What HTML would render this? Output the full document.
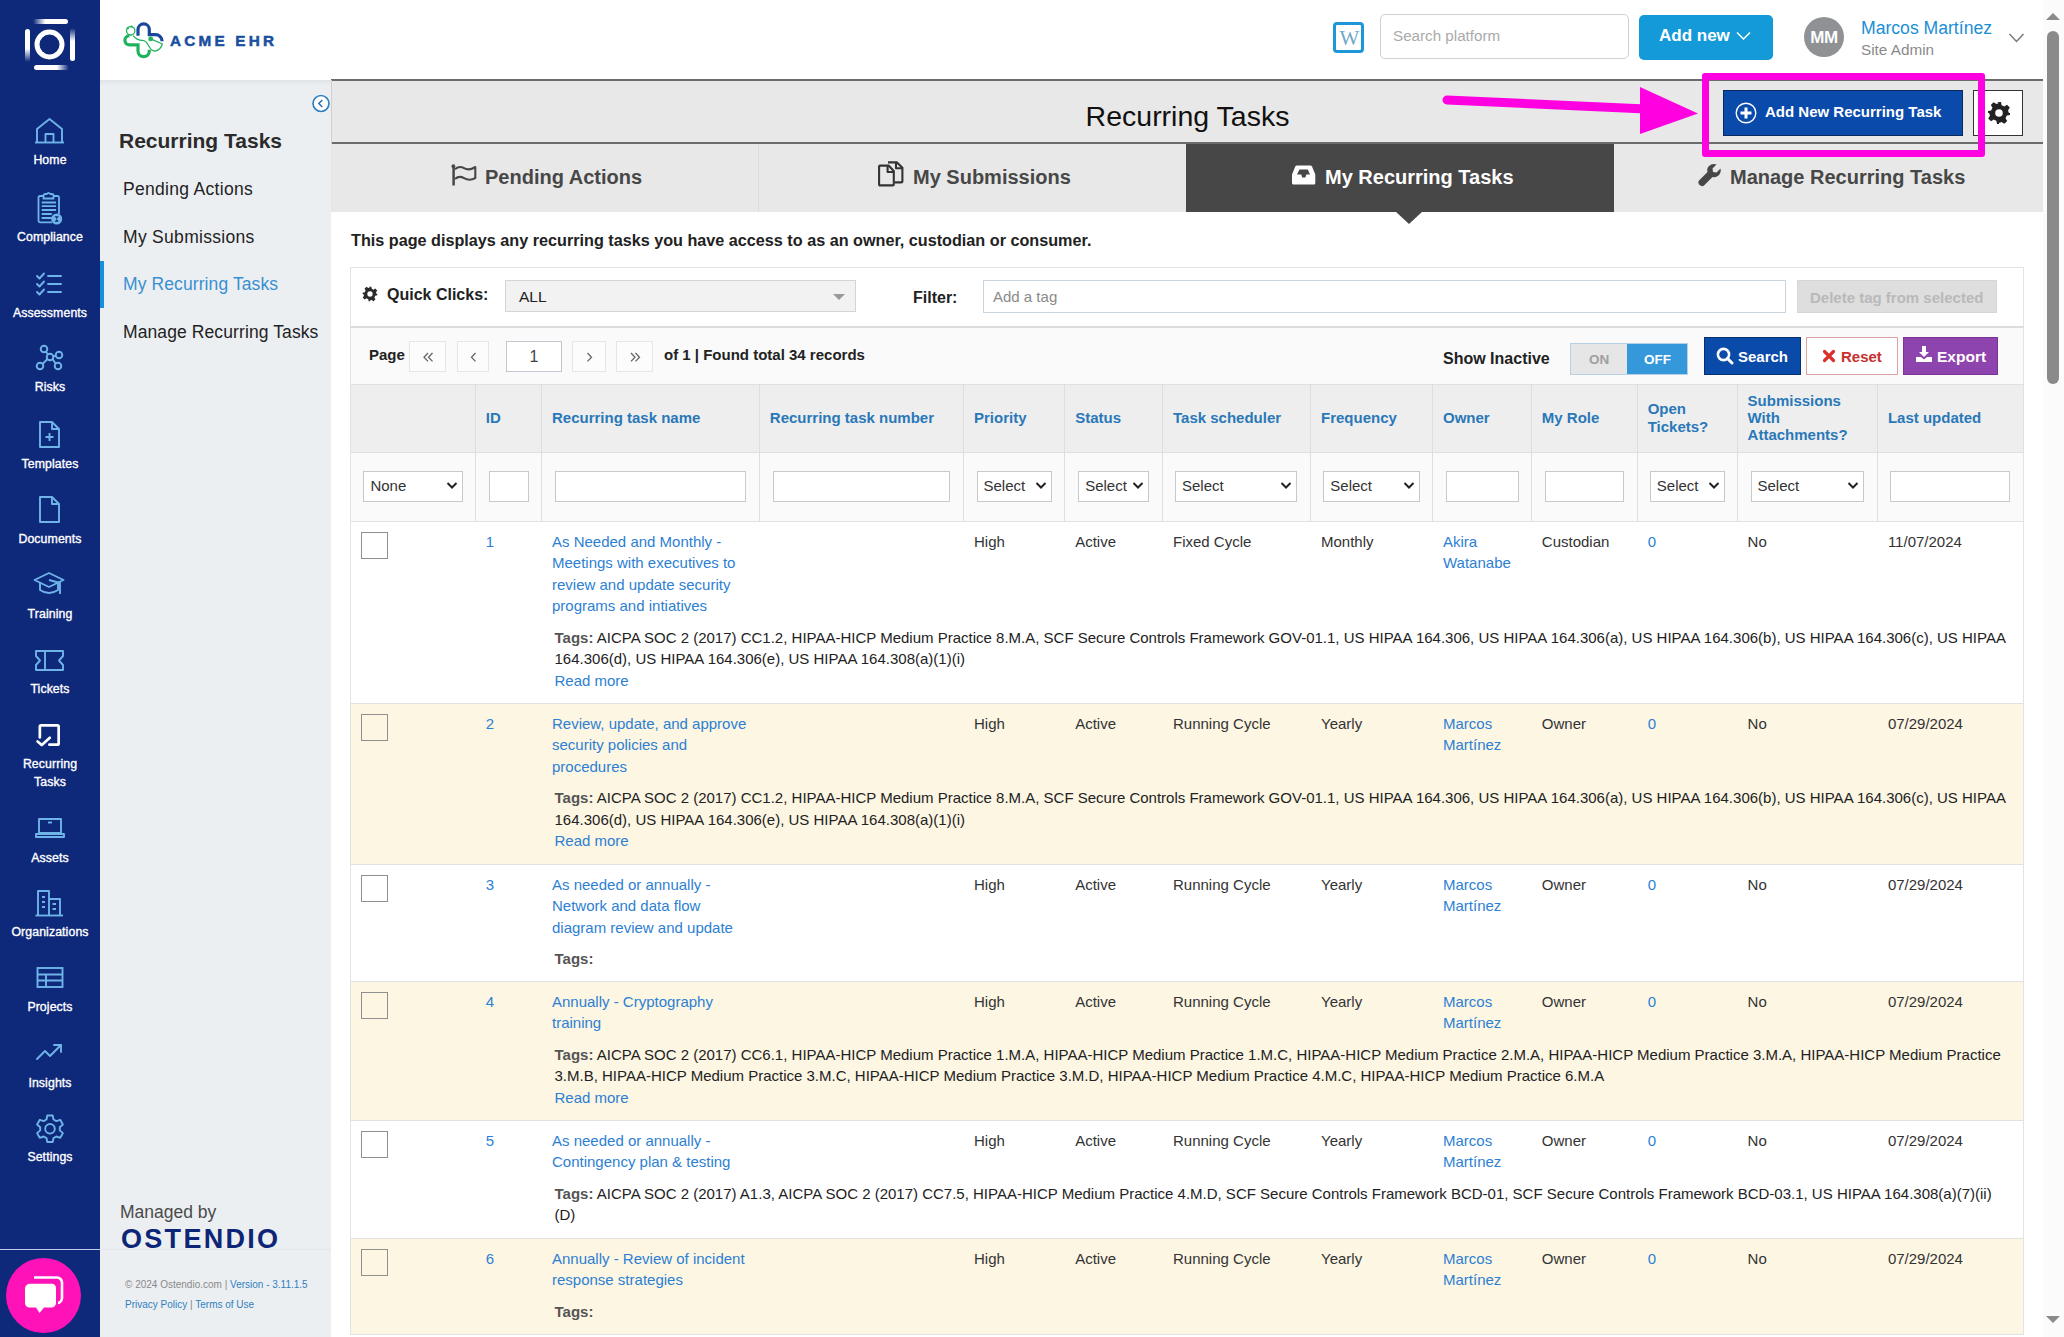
<!DOCTYPE html>
<html><head><meta charset="utf-8">
<style>
*{box-sizing:border-box;margin:0;padding:0}
html,body{width:2064px;height:1337px;overflow:hidden;background:#fff;font-family:"Liberation Sans",sans-serif;color:#333}
.abs{position:absolute}
#nav{position:absolute;left:0;top:0;width:100px;height:1337px;background:#0e287a}
#nav .lbl{position:absolute;left:0;width:100px;text-align:center;color:#fff;font-size:12.3px;font-weight:normal;line-height:17.5px;-webkit-text-stroke:0.35px #fff;letter-spacing:0.1px}
#nav svg{position:absolute}
#side{position:absolute;left:100px;top:80px;width:231px;height:1257px;background:#eceff2}
#hdr{position:absolute;left:100px;top:0;width:1944px;height:80px;background:#fff}
#main{position:absolute;left:331px;top:80px;width:1713px;height:1257px;background:#fff}
#scroll{position:absolute;left:2043px;top:0;width:21px;height:1337px;background:#fbfbfb}
</style></head><body>
<div id="hdr">
<!-- acme logo -->
<svg style="position:absolute;left:22px;top:20px" width="44" height="40" viewBox="0 0 44 40" fill="none" stroke-linecap="butt">
<path d="M16 15.7 V9.6 A5.65 5.65 0 0 1 27.3 9.6 V14.7 H33.5 A6.6 6.6 0 0 1 40.1 21.3" stroke="#1a479c" stroke-width="3.2"/>
<path d="M7.5 15.7 A4.6 4.6 0 0 0 7.5 24.9 H16 V31 A5.65 5.65 0 0 0 27.3 31 V29.8" stroke="#1fb35b" stroke-width="3.2"/>
<circle cx="8.7" cy="10.8" r="4.2" stroke="#1fb35b" stroke-width="1.3"/>
<circle cx="5.9" cy="8.2" r="1.1" fill="#1fb35b" stroke="none"/><circle cx="9.5" cy="6.6" r="1.1" fill="#1fb35b" stroke="none"/>
<path d="M11.1 15.6 Q15 20.5 20.6 20.3 Q24 20.5 26.5 25.5 Q29.5 31.5 33.5 31 Q38.5 30 40.4 24 L28.7 18.9" stroke="#1fb35b" stroke-width="1.3"/>
<circle cx="28.7" cy="18.9" r="2.4" fill="#1fb35b" stroke="none"/>
</svg>
<div style="position:absolute;left:70px;top:32px;font-weight:bold;font-size:15.3px;letter-spacing:3.2px;color:#1a4fa0;line-height:17px;-webkit-text-stroke:0.5px #1a4fa0">ACME EHR</div>
<!-- W icon -->
<div style="position:absolute;left:1233px;top:22px;width:31px;height:31px;border:3px solid #1e96d8;border-radius:4px;background:#fff"></div>
<div style="position:absolute;left:1233px;top:26px;width:31px;text-align:center;font-family:'Liberation Serif',serif;font-size:21px;color:#6fa8c8;line-height:24px;letter-spacing:-2px">W</div>
<div style="position:absolute;left:1280px;top:14px;width:249px;height:45px;border:1px solid #d0d0d0;border-radius:5px;background:#fff"></div>
<div style="position:absolute;left:1293px;top:27px;font-size:15.2px;color:#aaa;line-height:17px">Search platform</div>
<div style="position:absolute;left:1539px;top:15px;width:134px;height:45px;background:#149ad9;border-radius:5px"></div>
<div style="position:absolute;left:1559px;top:26px;font-size:17px;font-weight:bold;color:#fff;line-height:19px">Add new</div>
<svg style="position:absolute;left:1635px;top:29px" width="18" height="14" viewBox="0 0 18 14" fill="none" stroke="#fff" stroke-width="1.5"><path d="M2 3.5 L8.5 10 L15 3.5"/></svg>
<div style="position:absolute;left:1704px;top:17px;width:40px;height:40px;border-radius:50%;background:#8f9194"></div>
<div style="position:absolute;left:1704px;top:28px;width:40px;text-align:center;font-size:17px;font-weight:bold;color:#fff;line-height:19px;letter-spacing:-0.3px">MM</div>
<div style="position:absolute;left:1761px;top:18px;font-size:17.6px;color:#1a8fd4;line-height:20px">Marcos Martínez</div>
<div style="position:absolute;left:1761px;top:41px;font-size:15.3px;color:#8a8a8a;line-height:17px">Site Admin</div>
<svg style="position:absolute;left:1908px;top:32px" width="18" height="12" viewBox="0 0 18 12" fill="none" stroke="#777" stroke-width="1.4"><path d="M1.5 2 L8.5 9.5 L15.5 2"/></svg>
</div>
<div id="side">
<div style="position:absolute;left:0;top:0;width:231px;height:6px;background:linear-gradient(#dfe2e6,#eceff2)"></div>
<svg style="position:absolute;left:210px;top:13px" width="24" height="22" viewBox="0 0 24 22"><circle cx="11" cy="10.5" r="9.2" fill="#fff"/><circle cx="11" cy="10.5" r="8" fill="none" stroke="#2f7fc0" stroke-width="1.7"/><path d="M12.3 7 L8.8 10.5 L12.3 14" fill="none" stroke="#2a6fae" stroke-width="1.5"/></svg>
<div style="position:absolute;left:19px;top:49px;font-size:21px;font-weight:bold;color:#2b2b2b;line-height:24px">Recurring Tasks</div>
<div style="position:absolute;left:23px;top:99px;font-size:17.5px;letter-spacing:0.3px;color:#222;line-height:20px">Pending Actions</div>
<div style="position:absolute;left:23px;top:147px;font-size:17.5px;letter-spacing:0.3px;color:#222;line-height:20px">My Submissions</div>
<div style="position:absolute;left:0;top:181px;width:4px;height:47px;background:#1591dc"></div>
<div style="position:absolute;left:23px;top:194px;font-size:17.5px;letter-spacing:0.1px;color:#3a8fd0;line-height:20px">My Recurring Tasks</div>
<div style="position:absolute;left:23px;top:242px;font-size:17.5px;letter-spacing:0.1px;color:#222;line-height:20px">Manage Recurring Tasks</div>
<div style="position:absolute;left:20px;top:1121.5px;font-size:17.5px;color:#4a4a4a;line-height:20px">Managed by</div>
<div style="position:absolute;left:21px;top:1144px;font-size:27px;font-weight:bold;color:#0c2577;line-height:30px;letter-spacing:2.3px">OSTENDIO</div>
<div style="position:absolute;left:0;top:1169px;width:231px;height:1px;background:#e2e5e9"></div>
<div style="position:absolute;left:25px;top:1198px;font-size:10px;color:#888;line-height:13px;white-space:nowrap">© 2024 Ostendio.com | <span style="color:#2f7fc0">Version - 3.11.1.5</span></div>
<div style="position:absolute;left:25px;top:1218px;font-size:10px;color:#888;line-height:13px;white-space:nowrap"><span style="color:#2f7fc0">Privacy Policy</span> | <span style="color:#2f7fc0">Terms of Use</span></div>
</div>
<div id="main">
<div style="position:absolute;left:0;top:-1px;width:1712px;height:65px;background:#e8e8e8;border-top:2px solid #6b6b6b;border-bottom:2px solid #6b6b6b"></div>
<div style="position:absolute;left:0;top:0;width:1px;height:132px;background:#cfcfcf"></div>
<div style="position:absolute;left:0;top:20px;width:1713px;text-align:center;font-size:28.5px;color:#111;line-height:32px;padding-left:0">Recurring Tasks</div>
<!-- tabs -->
<div style="position:absolute;left:0;top:64px;width:1712px;height:68px;background:#e8e8e8"></div>
<div style="position:absolute;left:427px;top:64px;width:1px;height:68px;background:#dcdcdc"></div>
<div style="position:absolute;left:855px;top:64px;width:428px;height:68px;background:#474747"></div>
<div style="position:absolute;left:1064px;top:131px;width:0;height:0;border-left:14px solid transparent;border-right:14px solid transparent;border-top:13px solid #474747"></div>
<svg style="position:absolute;left:120px;top:84px" width="28" height="24" viewBox="0 0 28 24" fill="none" stroke="#474747"><path d="M2.6 3 V21.5" stroke-width="2.5"/><circle cx="2.4" cy="2.2" r="1.9" fill="#474747" stroke="none"/><path d="M4 5.2 C7 2.6 10 2.4 13 4.2 C16.5 6.2 20 5.8 24.3 3 V14.2 C20 16.6 16.5 16.2 13 14.2 C10 12.4 7 12.4 4 15" stroke-width="2.1" stroke-linejoin="round"/></svg>
<div style="position:absolute;left:154px;top:86px;font-size:20px;font-weight:bold;color:#474747;line-height:22px">Pending Actions</div>
<svg style="position:absolute;left:546px;top:80px" width="28" height="28" viewBox="0 0 28 28" fill="none" stroke="#333" stroke-width="2.1" stroke-linejoin="round"><path d="M11 2.4 H20 L25.4 7.8 V21.4 Q25.4 22.4 24.4 22.4 H17.8"/><path d="M19 2.4 V8.2 H25.4"/><path d="M3.1 5.6 H11.6 L16.8 11 V24.4 Q16.8 25.4 15.8 25.4 H3.1 Q2.1 25.4 2.1 24.4 V6.6 Q2.1 5.6 3.1 5.6 Z"/><path d="M10.6 5.6 V12 H16.8"/></svg>
<div style="position:absolute;left:582px;top:86px;font-size:20px;font-weight:bold;color:#474747;line-height:22px">My Submissions</div>
<svg style="position:absolute;left:960px;top:83px" width="26" height="23" viewBox="0 0 26 23"><path d="M6 2.5 H19.3 Q20.5 2.5 21 3.6 L24.3 11.5 V20 Q24.3 21.6 22.7 21.6 H2.6 Q1 21.6 1 20 V11.5 L4.3 3.6 Q4.8 2.5 6 2.5 Z" fill="#fff"/><path d="M8.5 6.4 H16.8 L19 11.5 H15.3 L14.4 14.4 H11.1 L10.3 11.5 H6 Z" fill="#474747"/></svg>
<div style="position:absolute;left:994px;top:86px;font-size:20px;font-weight:bold;color:#fff;line-height:22px">My Recurring Tasks</div>
<svg style="position:absolute;left:1366px;top:82px" width="26" height="26" viewBox="0 0 26 26"><path d="M23.5 6.5 L19.5 10.5 L16 10 L15.5 6.5 L19.5 2.5 Q15 1 12 4 Q9.5 6.5 10.5 10 L2 18.5 Q0.5 20.5 2.5 23 Q5 25 7 23.5 L15.5 15 Q19 16 21.5 13.5 Q24.5 10.5 23.5 6.5 Z" fill="#474747"/></svg>
<div style="position:absolute;left:1399px;top:86px;font-size:20px;font-weight:bold;color:#474747;line-height:22px">Manage Recurring Tasks</div>
<!-- add new recurring task -->
<div style="position:absolute;left:1392px;top:10px;width:240px;height:46px;background:#0a4aab;border:1px solid #0a2a5c"></div>
<svg style="position:absolute;left:1404px;top:21px" width="24" height="24" viewBox="0 0 24 24" fill="none" stroke="#fff"><circle cx="11" cy="12" r="9.8" stroke-width="1.4"/><path d="M11 6.5 V17.5 M5.5 12 H16.5" stroke-width="3"/></svg>
<div style="position:absolute;left:1434px;top:23px;font-size:15px;font-weight:bold;color:#fff;line-height:17px">Add New Recurring Task</div>
<div style="position:absolute;left:1642px;top:10px;width:50px;height:46px;background:#fff;border:1px solid #333"></div>
<svg style="position:absolute;left:1656px;top:21px" width="24" height="24" viewBox="0 0 24 24"><path fill="#222" d="M10 1 H14 L14.6 4.2 Q16 4.7 17.2 5.5 L20 3.8 L22.8 6.6 L21 9.4 Q21.6 10.6 21.9 12 L23 12 V12 L23 14 L19.8 14.6 Q19.3 16 18.5 17.2 L20.2 20 L17.4 22.8 L14.6 21 Q13.4 21.6 12 21.9 V23 H10 L9.4 19.8 Q8 19.3 6.8 18.5 L4 20.2 L1.2 17.4 L3 14.6 Q2.4 13.4 2.1 12 H1 V10 L4.2 9.4 Q4.7 8 5.5 6.8 L3.8 4 L6.6 1.2 L9.4 3 Q10.6 2.4 12 2.1 Z"/><circle cx="12" cy="12" r="3.8" fill="#fff"/></svg>
<!-- magenta box & arrow -->
<div style="position:absolute;left:1371px;top:-7px;width:283px;height:84px;border:7.5px solid #ff00e1;border-radius:3px"></div>
<svg style="position:absolute;left:1100px;top:0px" width="280" height="60" viewBox="0 0 280 60"><path d="M16 20 L215 29" stroke="#ff00e1" stroke-width="9" stroke-linecap="round"/><path d="M209 7 L267 33.5 L209 54 Z" fill="#ff00e1"/></svg>
<!-- description -->
<div style="position:absolute;left:20px;top:151px;font-size:16.2px;font-weight:bold;color:#222;line-height:19px;white-space:nowrap">This page displays any recurring tasks you have access to as an owner, custodian or consumer.</div>
</div>


<!--TABLE-->
<div style="position:absolute;left:350px;top:267px;width:1674px;height:61px;background:#fff;border:1px solid #e3e3e3;border-bottom:2px solid #dcdcdc"></div>
<svg style="position:absolute;left:362px;top:286px" width="16" height="16" viewBox="0 0 24 24"><path fill="#2b2b2b" d="M10 1 H14 L14.6 4.2 Q16 4.7 17.2 5.5 L20 3.8 L22.8 6.6 L21 9.4 Q21.6 10.6 21.9 12 L23 12 L23 14 L19.8 14.6 Q19.3 16 18.5 17.2 L20.2 20 L17.4 22.8 L14.6 21 Q13.4 21.6 12 21.9 V23 H10 L9.4 19.8 Q8 19.3 6.8 18.5 L4 20.2 L1.2 17.4 L3 14.6 Q2.4 13.4 2.1 12 H1 V10 L4.2 9.4 Q4.7 8 5.5 6.8 L3.8 4 L6.6 1.2 L9.4 3 Q10.6 2.4 12 2.1 Z"/><circle cx="12" cy="12" r="4" fill="#fff"/></svg>
<div style="position:absolute;left:387px;top:286px;white-space:nowrap;font-size:16px;font-weight:bold;color:#222;line-height:18px">Quick Clicks:</div>
<div style="position:absolute;left:505px;top:280px;width:351px;height:32px;background:#f2f2f2;border:1px solid #d5d5d5"></div>
<div style="position:absolute;left:519px;top:288px;white-space:nowrap;font-size:15.5px;color:#222;line-height:18px">ALL</div>
<div style="position:absolute;left:833px;top:294px;width:0;height:0;border-left:6px solid transparent;border-right:6px solid transparent;border-top:6px solid #999"></div>
<div style="position:absolute;left:913px;top:289px;white-space:nowrap;font-size:16px;font-weight:bold;color:#222;line-height:18px">Filter:</div>
<div style="position:absolute;left:983px;top:280px;width:803px;height:33px;background:#fff;border:1px solid #c9d4df"></div>
<div style="position:absolute;left:993px;top:288px;white-space:nowrap;font-size:15px;color:#8a8a8a;line-height:18px">Add a tag</div>
<div style="position:absolute;left:1797px;top:280px;width:200px;height:33px;background:#dedede;border:1px solid #d6d6d6"></div>
<div style="position:absolute;left:1810px;top:289px;white-space:nowrap;font-size:15px;font-weight:bold;color:#b9b9b9;line-height:18px">Delete tag from selected</div>
<div style="position:absolute;left:350px;top:328px;width:1674px;height:56px;background:#fafafa;border-left:1px solid #e3e3e3;border-right:1px solid #e3e3e3"></div>
<div style="position:absolute;left:369px;top:346px;white-space:nowrap;font-size:15px;font-weight:bold;color:#222;line-height:18px">Page</div>
<div style="position:absolute;left:408.5px;top:341px;width:37.5px;height:31px;background:#fcfcfc;border:1px solid #e6e6e6"></div>
<div style="position:absolute;left:457px;top:341px;width:32px;height:31px;background:#fcfcfc;border:1px solid #e6e6e6"></div>
<div style="position:absolute;left:572px;top:341px;width:34px;height:31px;background:#fcfcfc;border:1px solid #e6e6e6"></div>
<div style="position:absolute;left:616px;top:341px;width:37px;height:31px;background:#fcfcfc;border:1px solid #e6e6e6"></div>
<svg style="position:absolute;left:423px;top:351.5px" width="11" height="11" viewBox="0 0 11 11" fill="none" stroke="#666" stroke-width="1.3"><path d="M5 1 L1 5.2 L5 9.4 M9.5 1 L5.5 5.2 L9.5 9.4"/></svg>
<svg style="position:absolute;left:470.3px;top:351.5px" width="11" height="11" viewBox="0 0 11 11" fill="none" stroke="#666" stroke-width="1.3"><path d="M5.5 1 L1.5 5.2 L5.5 9.4"/></svg>
<svg style="position:absolute;left:585.8px;top:351.5px" width="11" height="11" viewBox="0 0 11 11" fill="none" stroke="#666" stroke-width="1.3"><path d="M1.5 1 L5.5 5.2 L1.5 9.4"/></svg>
<svg style="position:absolute;left:629.5px;top:351.5px" width="11" height="11" viewBox="0 0 11 11" fill="none" stroke="#666" stroke-width="1.3"><path d="M1 1 L5 5.2 L1 9.4 M5.5 1 L9.5 5.2 L5.5 9.4"/></svg>
<div style="position:absolute;left:506px;top:341px;width:56px;height:31px;background:#fff;border:1px solid #c3c8d0;color:#444;font-size:16px;line-height:29px;text-align:center">1</div>
<div style="position:absolute;left:664px;top:346px;white-space:nowrap;font-size:15px;font-weight:bold;color:#222;line-height:18px">of 1 | Found total 34 records</div>
<div style="position:absolute;left:1443px;top:350px;white-space:nowrap;font-size:16px;font-weight:bold;color:#222;line-height:18px">Show Inactive</div>
<div style="position:absolute;left:1570px;top:343px;width:118px;height:32px;background:#e6e6e6;border:1px solid #b5cfe3"></div>
<div style="position:absolute;left:1627px;top:344px;width:60px;height:30px;background:#3498db"></div>
<div style="position:absolute;left:1589px;top:352px;white-space:nowrap;font-size:13.5px;font-weight:bold;color:#a0a0a0;line-height:16px">ON</div>
<div style="position:absolute;left:1644px;top:352px;white-space:nowrap;font-size:13.5px;font-weight:bold;color:#fff;line-height:16px">OFF</div>
<div style="position:absolute;left:1704px;top:337px;width:97px;height:38px;background:#0a4aa8;border:1px solid #06306e"></div>
<svg style="position:absolute;left:1716px;top:347px" width="18" height="18" viewBox="0 0 18 18" fill="none" stroke="#fff"><circle cx="7.5" cy="7.5" r="5.6" stroke-width="2.6"/><path d="M11.5 11.5 L16 16" stroke-width="3" stroke-linecap="round"/></svg>
<div style="position:absolute;left:1738px;top:348px;white-space:nowrap;font-size:15px;font-weight:bold;color:#fff;line-height:18px">Search</div>
<div style="position:absolute;left:1806px;top:337px;width:92px;height:38px;background:#fff;border:1px solid #e0a3a3"></div>
<svg style="position:absolute;left:1822px;top:349px" width="14" height="14" viewBox="0 0 14 14" stroke="#d9302c" stroke-width="3.2" stroke-linecap="round"><path d="M2.5 2.5 L11.5 11.5 M11.5 2.5 L2.5 11.5"/></svg>
<div style="position:absolute;left:1841px;top:348px;white-space:nowrap;font-size:15px;font-weight:bold;color:#c9302c;line-height:18px">Reset</div>
<div style="position:absolute;left:1903px;top:337px;width:95px;height:38px;background:#8e44ad;border:1px solid #7a3596"></div>
<svg style="position:absolute;left:1915px;top:345px" width="18" height="18" viewBox="0 0 18 18" fill="#fff"><path d="M7 1 H11 V7 H14 L9 12 L4 7 H7 Z"/><path d="M1 12 H6 L9 14.5 L12 12 H17 V17 H1 Z"/></svg>
<div style="position:absolute;left:1937px;top:348px;white-space:nowrap;font-size:15.5px;font-weight:bold;color:#fff;line-height:18px">Export</div>
<div style="position:absolute;left:350px;top:383.5px;width:1674px;height:68px;background:#eeeeee;border:1px solid #e0e0e0;border-bottom:none"></div>
<div style="position:absolute;left:350px;top:451.5px;width:1674px;height:70px;background:#fafafa;border-left:1px solid #e3e3e3;border-right:1px solid #e3e3e3;border-top:1px solid #e0e0e0"></div>
<div style="position:absolute;left:474.8px;top:383.5px;width:1px;height:137px;background:#dedede"></div>
<div style="position:absolute;left:541.0px;top:383.5px;width:1px;height:137px;background:#dedede"></div>
<div style="position:absolute;left:758.8px;top:383.5px;width:1px;height:137px;background:#dedede"></div>
<div style="position:absolute;left:963.0px;top:383.5px;width:1px;height:137px;background:#dedede"></div>
<div style="position:absolute;left:1064.2px;top:383.5px;width:1px;height:137px;background:#dedede"></div>
<div style="position:absolute;left:1162.0px;top:383.5px;width:1px;height:137px;background:#dedede"></div>
<div style="position:absolute;left:1310.0px;top:383.5px;width:1px;height:137px;background:#dedede"></div>
<div style="position:absolute;left:1432.0px;top:383.5px;width:1px;height:137px;background:#dedede"></div>
<div style="position:absolute;left:1530.8px;top:383.5px;width:1px;height:137px;background:#dedede"></div>
<div style="position:absolute;left:1636.7px;top:383.5px;width:1px;height:137px;background:#dedede"></div>
<div style="position:absolute;left:1736.6px;top:383.5px;width:1px;height:137px;background:#dedede"></div>
<div style="position:absolute;left:1876.9px;top:383.5px;width:1px;height:137px;background:#dedede"></div>
<div style="position:absolute;left:485.8px;top:408.875px;white-space:nowrap;font-size:15px;font-weight:bold;color:#2a78b8;line-height:17.25px">ID</div>
<div style="position:absolute;left:552.0px;top:408.875px;white-space:nowrap;font-size:15px;font-weight:bold;color:#2a78b8;line-height:17.25px">Recurring task name</div>
<div style="position:absolute;left:769.8px;top:408.875px;white-space:nowrap;font-size:15px;font-weight:bold;color:#2a78b8;line-height:17.25px">Recurring task number</div>
<div style="position:absolute;left:974.0px;top:408.875px;white-space:nowrap;font-size:15px;font-weight:bold;color:#2a78b8;line-height:17.25px">Priority</div>
<div style="position:absolute;left:1075.2px;top:408.875px;white-space:nowrap;font-size:15px;font-weight:bold;color:#2a78b8;line-height:17.25px">Status</div>
<div style="position:absolute;left:1173.0px;top:408.875px;white-space:nowrap;font-size:15px;font-weight:bold;color:#2a78b8;line-height:17.25px">Task scheduler</div>
<div style="position:absolute;left:1321.0px;top:408.875px;white-space:nowrap;font-size:15px;font-weight:bold;color:#2a78b8;line-height:17.25px">Frequency</div>
<div style="position:absolute;left:1443.0px;top:408.875px;white-space:nowrap;font-size:15px;font-weight:bold;color:#2a78b8;line-height:17.25px">Owner</div>
<div style="position:absolute;left:1541.8px;top:408.875px;white-space:nowrap;font-size:15px;font-weight:bold;color:#2a78b8;line-height:17.25px">My Role</div>
<div style="position:absolute;left:1647.7px;top:400.25px;white-space:nowrap;font-size:15px;font-weight:bold;color:#2a78b8;line-height:17.25px">Open<br>Tickets?</div>
<div style="position:absolute;left:1747.6px;top:391.625px;white-space:nowrap;font-size:15px;font-weight:bold;color:#2a78b8;line-height:17.25px">Submissions<br>With<br>Attachments?</div>
<div style="position:absolute;left:1887.9px;top:408.875px;white-space:nowrap;font-size:15px;font-weight:bold;color:#2a78b8;line-height:17.25px">Last updated</div>
<div style="position:absolute;left:363.4px;top:470.6px;width:99.70000000000005px;height:31px;background:#fff;border:1px solid #c9c9c9"></div>
<div style="position:absolute;left:370.4px;top:477px;white-space:nowrap;font-size:15px;color:#333;line-height:18px">None</div>
<svg style="position:absolute;left:446.1px;top:481px" width="12" height="9" viewBox="0 0 12 9" fill="none" stroke="#222" stroke-width="2"><path d="M1.5 2 L6 6.5 L10.5 2"/></svg>
<div style="position:absolute;left:489.2px;top:470.6px;width:39.599999999999966px;height:31px;background:#fff;border:1px solid #c9c9c9"></div>
<div style="position:absolute;left:555px;top:470.6px;width:191px;height:31px;background:#fff;border:1px solid #c9c9c9"></div>
<div style="position:absolute;left:772.5px;top:470.6px;width:177.79999999999995px;height:31px;background:#fff;border:1px solid #c9c9c9"></div>
<div style="position:absolute;left:976.5px;top:470.6px;width:75.5px;height:31px;background:#fff;border:1px solid #c9c9c9"></div>
<div style="position:absolute;left:983.5px;top:477px;white-space:nowrap;font-size:15px;color:#333;line-height:18px">Select</div>
<svg style="position:absolute;left:1035px;top:481px" width="12" height="9" viewBox="0 0 12 9" fill="none" stroke="#222" stroke-width="2"><path d="M1.5 2 L6 6.5 L10.5 2"/></svg>
<div style="position:absolute;left:1078.2px;top:470.6px;width:70.79999999999995px;height:31px;background:#fff;border:1px solid #c9c9c9"></div>
<div style="position:absolute;left:1085.2px;top:477px;white-space:nowrap;font-size:15px;color:#333;line-height:18px">Select</div>
<svg style="position:absolute;left:1132px;top:481px" width="12" height="9" viewBox="0 0 12 9" fill="none" stroke="#222" stroke-width="2"><path d="M1.5 2 L6 6.5 L10.5 2"/></svg>
<div style="position:absolute;left:1175px;top:470.6px;width:121.79999999999995px;height:31px;background:#fff;border:1px solid #c9c9c9"></div>
<div style="position:absolute;left:1182px;top:477px;white-space:nowrap;font-size:15px;color:#333;line-height:18px">Select</div>
<svg style="position:absolute;left:1279.8px;top:481px" width="12" height="9" viewBox="0 0 12 9" fill="none" stroke="#222" stroke-width="2"><path d="M1.5 2 L6 6.5 L10.5 2"/></svg>
<div style="position:absolute;left:1323.3px;top:470.6px;width:96.70000000000005px;height:31px;background:#fff;border:1px solid #c9c9c9"></div>
<div style="position:absolute;left:1330.3px;top:477px;white-space:nowrap;font-size:15px;color:#333;line-height:18px">Select</div>
<svg style="position:absolute;left:1403px;top:481px" width="12" height="9" viewBox="0 0 12 9" fill="none" stroke="#222" stroke-width="2"><path d="M1.5 2 L6 6.5 L10.5 2"/></svg>
<div style="position:absolute;left:1446.2px;top:470.6px;width:72.89999999999986px;height:31px;background:#fff;border:1px solid #c9c9c9"></div>
<div style="position:absolute;left:1545px;top:470.6px;width:78.5px;height:31px;background:#fff;border:1px solid #c9c9c9"></div>
<div style="position:absolute;left:1649.8px;top:470.6px;width:74.79999999999995px;height:31px;background:#fff;border:1px solid #c9c9c9"></div>
<div style="position:absolute;left:1656.8px;top:477px;white-space:nowrap;font-size:15px;color:#333;line-height:18px">Select</div>
<svg style="position:absolute;left:1707.6px;top:481px" width="12" height="9" viewBox="0 0 12 9" fill="none" stroke="#222" stroke-width="2"><path d="M1.5 2 L6 6.5 L10.5 2"/></svg>
<div style="position:absolute;left:1750.5px;top:470.6px;width:113.20000000000005px;height:31px;background:#fff;border:1px solid #c9c9c9"></div>
<div style="position:absolute;left:1757.5px;top:477px;white-space:nowrap;font-size:15px;color:#333;line-height:18px">Select</div>
<svg style="position:absolute;left:1846.7px;top:481px" width="12" height="9" viewBox="0 0 12 9" fill="none" stroke="#222" stroke-width="2"><path d="M1.5 2 L6 6.5 L10.5 2"/></svg>
<div style="position:absolute;left:1890px;top:470.6px;width:120px;height:31px;background:#fff;border:1px solid #c9c9c9"></div>
<div style="position:absolute;left:350px;top:521px;width:1674px;height:182px;background:#fff;border-left:1px solid #e3e3e3;border-right:1px solid #e3e3e3;border-top:1px solid #e2e2e2"></div>
<div style="position:absolute;left:361px;top:532px;width:27px;height:27px;background:#fff;border:1px solid #8f8f8f"></div>
<div style="position:absolute;left:485.8px;top:531px;white-space:nowrap;font-size:15px;color:#2d7fd3;line-height:21.43px">1</div>
<div style="position:absolute;left:552.0px;top:531px;white-space:nowrap;font-size:15px;color:#2d7fd3;line-height:21.43px">As Needed and Monthly -<br>Meetings with executives to<br>review and update security<br>programs and intiatives</div>
<div style="position:absolute;left:974.0px;top:531px;white-space:nowrap;font-size:15px;color:#333;line-height:21.43px">High</div>
<div style="position:absolute;left:1075.2px;top:531px;white-space:nowrap;font-size:15px;color:#333;line-height:21.43px">Active</div>
<div style="position:absolute;left:1173.0px;top:531px;white-space:nowrap;font-size:15px;color:#333;line-height:21.43px">Fixed Cycle</div>
<div style="position:absolute;left:1321.0px;top:531px;white-space:nowrap;font-size:15px;color:#333;line-height:21.43px">Monthly</div>
<div style="position:absolute;left:1443.0px;top:531px;white-space:nowrap;font-size:15px;color:#2d7fd3;line-height:21.43px">Akira<br>Watanabe</div>
<div style="position:absolute;left:1541.8px;top:531px;white-space:nowrap;font-size:15px;color:#333;line-height:21.43px">Custodian</div>
<div style="position:absolute;left:1647.7px;top:531px;white-space:nowrap;font-size:15px;color:#2d7fd3;line-height:21.43px">0</div>
<div style="position:absolute;left:1747.6px;top:531px;white-space:nowrap;font-size:15px;color:#333;line-height:21.43px">No</div>
<div style="position:absolute;left:1887.9px;top:531px;white-space:nowrap;font-size:15px;color:#333;line-height:21.43px">11/07/2024</div>
<div style="position:absolute;left:554.5px;top:626.72px;white-space:nowrap;font-size:15px;color:#222;line-height:21.43px"><b style="color:#555">Tags:</b> AICPA SOC 2 (2017) CC1.2, HIPAA-HICP Medium Practice 8.M.A, SCF Secure Controls Framework GOV-01.1, US HIPAA 164.306, US HIPAA 164.306(a), US HIPAA 164.306(b), US HIPAA 164.306(c), US HIPAA<br>164.306(d), US HIPAA 164.306(e), US HIPAA 164.308(a)(1)(i)<br><span style="color:#2d7fd3">Read more</span></div>
<div style="position:absolute;left:350px;top:703px;width:1674px;height:161px;background:#fcf6e3;border-left:1px solid #e3e3e3;border-right:1px solid #e3e3e3;border-top:1px solid #e2e2e2"></div>
<div style="position:absolute;left:361px;top:714px;width:27px;height:27px;background:#fcf6e3;border:1px solid #8f8f8f"></div>
<div style="position:absolute;left:485.8px;top:713px;white-space:nowrap;font-size:15px;color:#2d7fd3;line-height:21.43px">2</div>
<div style="position:absolute;left:552.0px;top:713px;white-space:nowrap;font-size:15px;color:#2d7fd3;line-height:21.43px">Review, update, and approve<br>security policies and<br>procedures</div>
<div style="position:absolute;left:974.0px;top:713px;white-space:nowrap;font-size:15px;color:#333;line-height:21.43px">High</div>
<div style="position:absolute;left:1075.2px;top:713px;white-space:nowrap;font-size:15px;color:#333;line-height:21.43px">Active</div>
<div style="position:absolute;left:1173.0px;top:713px;white-space:nowrap;font-size:15px;color:#333;line-height:21.43px">Running Cycle</div>
<div style="position:absolute;left:1321.0px;top:713px;white-space:nowrap;font-size:15px;color:#333;line-height:21.43px">Yearly</div>
<div style="position:absolute;left:1443.0px;top:713px;white-space:nowrap;font-size:15px;color:#2d7fd3;line-height:21.43px">Marcos<br>Martínez</div>
<div style="position:absolute;left:1541.8px;top:713px;white-space:nowrap;font-size:15px;color:#333;line-height:21.43px">Owner</div>
<div style="position:absolute;left:1647.7px;top:713px;white-space:nowrap;font-size:15px;color:#2d7fd3;line-height:21.43px">0</div>
<div style="position:absolute;left:1747.6px;top:713px;white-space:nowrap;font-size:15px;color:#333;line-height:21.43px">No</div>
<div style="position:absolute;left:1887.9px;top:713px;white-space:nowrap;font-size:15px;color:#333;line-height:21.43px">07/29/2024</div>
<div style="position:absolute;left:554.5px;top:787.29px;white-space:nowrap;font-size:15px;color:#222;line-height:21.43px"><b style="color:#555">Tags:</b> AICPA SOC 2 (2017) CC1.2, HIPAA-HICP Medium Practice 8.M.A, SCF Secure Controls Framework GOV-01.1, US HIPAA 164.306, US HIPAA 164.306(a), US HIPAA 164.306(b), US HIPAA 164.306(c), US HIPAA<br>164.306(d), US HIPAA 164.306(e), US HIPAA 164.308(a)(1)(i)<br><span style="color:#2d7fd3">Read more</span></div>
<div style="position:absolute;left:350px;top:864px;width:1674px;height:117px;background:#fff;border-left:1px solid #e3e3e3;border-right:1px solid #e3e3e3;border-top:1px solid #e2e2e2"></div>
<div style="position:absolute;left:361px;top:875px;width:27px;height:27px;background:#fff;border:1px solid #8f8f8f"></div>
<div style="position:absolute;left:485.8px;top:874px;white-space:nowrap;font-size:15px;color:#2d7fd3;line-height:21.43px">3</div>
<div style="position:absolute;left:552.0px;top:874px;white-space:nowrap;font-size:15px;color:#2d7fd3;line-height:21.43px">As needed or annually -<br>Network and data flow<br>diagram review and update</div>
<div style="position:absolute;left:974.0px;top:874px;white-space:nowrap;font-size:15px;color:#333;line-height:21.43px">High</div>
<div style="position:absolute;left:1075.2px;top:874px;white-space:nowrap;font-size:15px;color:#333;line-height:21.43px">Active</div>
<div style="position:absolute;left:1173.0px;top:874px;white-space:nowrap;font-size:15px;color:#333;line-height:21.43px">Running Cycle</div>
<div style="position:absolute;left:1321.0px;top:874px;white-space:nowrap;font-size:15px;color:#333;line-height:21.43px">Yearly</div>
<div style="position:absolute;left:1443.0px;top:874px;white-space:nowrap;font-size:15px;color:#2d7fd3;line-height:21.43px">Marcos<br>Martínez</div>
<div style="position:absolute;left:1541.8px;top:874px;white-space:nowrap;font-size:15px;color:#333;line-height:21.43px">Owner</div>
<div style="position:absolute;left:1647.7px;top:874px;white-space:nowrap;font-size:15px;color:#2d7fd3;line-height:21.43px">0</div>
<div style="position:absolute;left:1747.6px;top:874px;white-space:nowrap;font-size:15px;color:#333;line-height:21.43px">No</div>
<div style="position:absolute;left:1887.9px;top:874px;white-space:nowrap;font-size:15px;color:#333;line-height:21.43px">07/29/2024</div>
<div style="position:absolute;left:554.5px;top:948.29px;white-space:nowrap;font-size:15px;color:#222;line-height:21.43px"><b style="color:#555">Tags:</b> </div>
<div style="position:absolute;left:350px;top:981px;width:1674px;height:139px;background:#fcf6e3;border-left:1px solid #e3e3e3;border-right:1px solid #e3e3e3;border-top:1px solid #e2e2e2"></div>
<div style="position:absolute;left:361px;top:992px;width:27px;height:27px;background:#fcf6e3;border:1px solid #8f8f8f"></div>
<div style="position:absolute;left:485.8px;top:991px;white-space:nowrap;font-size:15px;color:#2d7fd3;line-height:21.43px">4</div>
<div style="position:absolute;left:552.0px;top:991px;white-space:nowrap;font-size:15px;color:#2d7fd3;line-height:21.43px">Annually - Cryptography<br>training</div>
<div style="position:absolute;left:974.0px;top:991px;white-space:nowrap;font-size:15px;color:#333;line-height:21.43px">High</div>
<div style="position:absolute;left:1075.2px;top:991px;white-space:nowrap;font-size:15px;color:#333;line-height:21.43px">Active</div>
<div style="position:absolute;left:1173.0px;top:991px;white-space:nowrap;font-size:15px;color:#333;line-height:21.43px">Running Cycle</div>
<div style="position:absolute;left:1321.0px;top:991px;white-space:nowrap;font-size:15px;color:#333;line-height:21.43px">Yearly</div>
<div style="position:absolute;left:1443.0px;top:991px;white-space:nowrap;font-size:15px;color:#2d7fd3;line-height:21.43px">Marcos<br>Martínez</div>
<div style="position:absolute;left:1541.8px;top:991px;white-space:nowrap;font-size:15px;color:#333;line-height:21.43px">Owner</div>
<div style="position:absolute;left:1647.7px;top:991px;white-space:nowrap;font-size:15px;color:#2d7fd3;line-height:21.43px">0</div>
<div style="position:absolute;left:1747.6px;top:991px;white-space:nowrap;font-size:15px;color:#333;line-height:21.43px">No</div>
<div style="position:absolute;left:1887.9px;top:991px;white-space:nowrap;font-size:15px;color:#333;line-height:21.43px">07/29/2024</div>
<div style="position:absolute;left:554.5px;top:1043.86px;white-space:nowrap;font-size:15px;color:#222;line-height:21.43px"><b style="color:#555">Tags:</b> AICPA SOC 2 (2017) CC6.1, HIPAA-HICP Medium Practice 1.M.A, HIPAA-HICP Medium Practice 1.M.C, HIPAA-HICP Medium Practice 2.M.A, HIPAA-HICP Medium Practice 3.M.A, HIPAA-HICP Medium Practice<br>3.M.B, HIPAA-HICP Medium Practice 3.M.C, HIPAA-HICP Medium Practice 3.M.D, HIPAA-HICP Medium Practice 4.M.C, HIPAA-HICP Medium Practice 6.M.A<br><span style="color:#2d7fd3">Read more</span></div>
<div style="position:absolute;left:350px;top:1120px;width:1674px;height:118px;background:#fff;border-left:1px solid #e3e3e3;border-right:1px solid #e3e3e3;border-top:1px solid #e2e2e2"></div>
<div style="position:absolute;left:361px;top:1131px;width:27px;height:27px;background:#fff;border:1px solid #8f8f8f"></div>
<div style="position:absolute;left:485.8px;top:1130px;white-space:nowrap;font-size:15px;color:#2d7fd3;line-height:21.43px">5</div>
<div style="position:absolute;left:552.0px;top:1130px;white-space:nowrap;font-size:15px;color:#2d7fd3;line-height:21.43px">As needed or annually -<br>Contingency plan &amp; testing</div>
<div style="position:absolute;left:974.0px;top:1130px;white-space:nowrap;font-size:15px;color:#333;line-height:21.43px">High</div>
<div style="position:absolute;left:1075.2px;top:1130px;white-space:nowrap;font-size:15px;color:#333;line-height:21.43px">Active</div>
<div style="position:absolute;left:1173.0px;top:1130px;white-space:nowrap;font-size:15px;color:#333;line-height:21.43px">Running Cycle</div>
<div style="position:absolute;left:1321.0px;top:1130px;white-space:nowrap;font-size:15px;color:#333;line-height:21.43px">Yearly</div>
<div style="position:absolute;left:1443.0px;top:1130px;white-space:nowrap;font-size:15px;color:#2d7fd3;line-height:21.43px">Marcos<br>Martínez</div>
<div style="position:absolute;left:1541.8px;top:1130px;white-space:nowrap;font-size:15px;color:#333;line-height:21.43px">Owner</div>
<div style="position:absolute;left:1647.7px;top:1130px;white-space:nowrap;font-size:15px;color:#2d7fd3;line-height:21.43px">0</div>
<div style="position:absolute;left:1747.6px;top:1130px;white-space:nowrap;font-size:15px;color:#333;line-height:21.43px">No</div>
<div style="position:absolute;left:1887.9px;top:1130px;white-space:nowrap;font-size:15px;color:#333;line-height:21.43px">07/29/2024</div>
<div style="position:absolute;left:554.5px;top:1182.86px;white-space:nowrap;font-size:15px;color:#222;line-height:21.43px"><b style="color:#555">Tags:</b> AICPA SOC 2 (2017) A1.3, AICPA SOC 2 (2017) CC7.5, HIPAA-HICP Medium Practice 4.M.D, SCF Secure Controls Framework BCD-01, SCF Secure Controls Framework BCD-03.1, US HIPAA 164.308(a)(7)(ii)<br>(D)</div>
<div style="position:absolute;left:350px;top:1238px;width:1674px;height:96px;background:#fcf6e3;border-left:1px solid #e3e3e3;border-right:1px solid #e3e3e3;border-top:1px solid #e2e2e2"></div>
<div style="position:absolute;left:361px;top:1249px;width:27px;height:27px;background:#fcf6e3;border:1px solid #8f8f8f"></div>
<div style="position:absolute;left:485.8px;top:1248px;white-space:nowrap;font-size:15px;color:#2d7fd3;line-height:21.43px">6</div>
<div style="position:absolute;left:552.0px;top:1248px;white-space:nowrap;font-size:15px;color:#2d7fd3;line-height:21.43px">Annually - Review of incident<br>response strategies</div>
<div style="position:absolute;left:974.0px;top:1248px;white-space:nowrap;font-size:15px;color:#333;line-height:21.43px">High</div>
<div style="position:absolute;left:1075.2px;top:1248px;white-space:nowrap;font-size:15px;color:#333;line-height:21.43px">Active</div>
<div style="position:absolute;left:1173.0px;top:1248px;white-space:nowrap;font-size:15px;color:#333;line-height:21.43px">Running Cycle</div>
<div style="position:absolute;left:1321.0px;top:1248px;white-space:nowrap;font-size:15px;color:#333;line-height:21.43px">Yearly</div>
<div style="position:absolute;left:1443.0px;top:1248px;white-space:nowrap;font-size:15px;color:#2d7fd3;line-height:21.43px">Marcos<br>Martínez</div>
<div style="position:absolute;left:1541.8px;top:1248px;white-space:nowrap;font-size:15px;color:#333;line-height:21.43px">Owner</div>
<div style="position:absolute;left:1647.7px;top:1248px;white-space:nowrap;font-size:15px;color:#2d7fd3;line-height:21.43px">0</div>
<div style="position:absolute;left:1747.6px;top:1248px;white-space:nowrap;font-size:15px;color:#333;line-height:21.43px">No</div>
<div style="position:absolute;left:1887.9px;top:1248px;white-space:nowrap;font-size:15px;color:#333;line-height:21.43px">07/29/2024</div>
<div style="position:absolute;left:554.5px;top:1300.86px;white-space:nowrap;font-size:15px;color:#222;line-height:21.43px"><b style="color:#555">Tags:</b> </div>
<div style="position:absolute;left:350px;top:1334px;width:1674px;height:1px;background:#e2e2e2"></div>
<!--/TABLE-->
<div id="nav">
<svg style="left:22px;top:16px" width="56" height="58" viewBox="0 0 56 58">
<defs>
<linearGradient id="gt" x1="0" x2="1"><stop offset="0" stop-color="#fff" stop-opacity="0"/><stop offset="0.35" stop-color="#fff"/><stop offset="1" stop-color="#fff"/></linearGradient>
<linearGradient id="gb" x1="1" x2="0"><stop offset="0" stop-color="#fff" stop-opacity="0"/><stop offset="0.35" stop-color="#fff"/><stop offset="1" stop-color="#fff"/></linearGradient>
<linearGradient id="gl" x1="0" x2="0" y1="1" y2="0"><stop offset="0" stop-color="#fff" stop-opacity="0"/><stop offset="0.4" stop-color="#fff"/><stop offset="1" stop-color="#fff"/></linearGradient>
<linearGradient id="gr" x1="0" x2="0" y1="0" y2="1"><stop offset="0" stop-color="#fff" stop-opacity="0"/><stop offset="0.4" stop-color="#fff"/><stop offset="1" stop-color="#fff"/></linearGradient>
</defs>
<rect x="11" y="3" width="35" height="5" rx="2.5" fill="url(#gt)"/>
<rect x="12" y="49" width="35" height="5" rx="2.5" fill="url(#gb)"/>
<rect x="3" y="13" width="5" height="33" rx="2.5" fill="url(#gl)"/>
<rect x="48" y="12" width="5" height="33" rx="2.5" fill="url(#gr)"/>
<circle cx="27.5" cy="28.5" r="12.5" fill="none" stroke="#fff" stroke-width="5"/>
</svg>
<!-- home -->
<svg style="left:34px;top:117px" width="32" height="28" viewBox="0 0 32 28" fill="none" stroke="#6eb4e8" stroke-width="1.9" stroke-linejoin="round">
<path d="M3 25 V12 L15.5 2 L28 12 V25"/><path d="M1 25.5 H30"/><path d="M11.5 25 V17 H19.5 V25"/>
</svg>
<div class="lbl" style="top:152px">Home</div>
<!-- compliance -->
<svg style="left:34px;top:190px" width="32" height="36" viewBox="0 0 32 36" fill="none" stroke="#6eb4e8" stroke-width="1.8">
<path d="M9.5 6 H6 a1.5 1.5 0 0 0 -1.5 1.5 V30.8 a1.5 1.5 0 0 0 1.5 1.5 H18"/><path d="M19.5 6 H23.5 a1.5 1.5 0 0 1 1.5 1.5 V24"/>
<path d="M9.5 8.5 V5.5 Q9.5 4 11.5 4 H12.8 Q14.5 1.6 16.2 4 H17.5 Q19.5 4 19.5 5.5 V8.5 Z"/>
<path d="M7.7 12.5 H22 M7.7 16.2 H22 M7.7 20 H22 M7.7 24 H17.8 M7.7 28 H17.8"/>
<circle cx="22.7" cy="29" r="4.6" fill="#6eb4e8"/><path d="M20.6 26.2 H24.8 L20.6 31.8 H24.8 Z" fill="#0e287a" stroke="none"/>
</svg>
<div class="lbl" style="top:229px">Compliance</div>
<!-- assessments -->
<svg style="left:34px;top:270px" width="32" height="28" viewBox="0 0 32 28" fill="none" stroke="#6eb4e8" stroke-width="1.9" stroke-linecap="round" stroke-linejoin="round">
<path d="M3 6 l2.5 2.5 L10 3.5 M3 14 l2.5 2.5 L10 11.5 M3 22 l2.5 2.5 L10 19.5"/><path d="M14 6 H27 M14 14 H27 M14 22 H27"/>
</svg>
<div class="lbl" style="top:305px">Assessments</div>
<!-- risks -->
<svg style="left:34px;top:344px" width="32" height="28" viewBox="0 0 32 28" fill="none" stroke="#6eb4e8" stroke-width="1.9">
<circle cx="10" cy="5" r="3.3"/><circle cx="16" cy="13" r="3.3"/><circle cx="6" cy="22" r="3.3"/><circle cx="25" cy="11" r="3.3"/><circle cx="24" cy="22" r="3.3"/>
<path d="M11.8 7.5 L14 10.5 M13.5 15 L8.5 20 M19.2 12.3 L21.8 11.7 M18.6 15 L21.5 19.6"/>
</svg>
<div class="lbl" style="top:379px">Risks</div>
<!-- templates -->
<svg style="left:36px;top:420px" width="28" height="30" viewBox="0 0 28 30" fill="none" stroke="#6eb4e8" stroke-width="1.9" stroke-linejoin="round">
<path d="M4 2 H16 L23 9 V27 H4 Z"/><path d="M16 2 V9 H23"/><path d="M13.5 13 V21 M9.5 17 H17.5"/>
</svg>
<div class="lbl" style="top:456px">Templates</div>
<!-- documents -->
<svg style="left:36px;top:495px" width="28" height="30" viewBox="0 0 28 30" fill="none" stroke="#6eb4e8" stroke-width="1.9" stroke-linejoin="round">
<path d="M4 2 H16 L23 9 V27 H4 Z"/><path d="M16 2 V9 H23"/>
</svg>
<div class="lbl" style="top:531px">Documents</div>
<!-- training -->
<svg style="left:33px;top:570px" width="34" height="30" viewBox="0 0 34 30" fill="none" stroke="#6eb4e8" stroke-width="1.9" stroke-linejoin="round">
<path d="M1.5 10 L16 3 L30.5 10 L16 17 Z"/><path d="M7 13 V20 Q16 26 25 20 V13"/><path d="M16 10 L27 13 V24"/>
</svg>
<div class="lbl" style="top:606px">Training</div>
<!-- tickets -->
<svg style="left:34px;top:648px" width="32" height="26" viewBox="0 0 32 26" fill="none" stroke="#6eb4e8" stroke-width="1.9" stroke-linejoin="round">
<path d="M2 3 H29 V8 L25 12.5 L29 17 V22 H2 V17 L6 12.5 L2 8 Z"/><path d="M11 3 V22"/>
</svg>
<div class="lbl" style="top:681px">Tickets</div>
<!-- recurring -->
<svg style="left:34px;top:722px" width="32" height="28" viewBox="0 0 32 28" fill="none" stroke="#fff" stroke-width="2.7" stroke-linejoin="round" stroke-linecap="round">
<path d="M5.85 15.4 V4.6 Q5.85 3.35 7.1 3.35 H23.4 Q24.65 3.35 24.65 4.6 V21.4 Q24.65 22.65 23.4 22.65 H15.4"/><path d="M3.6 19.4 L7.8 23 L15.8 15.8"/>
</svg>
<div class="lbl" style="top:756px">Recurring<br>Tasks</div>
<!-- assets -->
<svg style="left:34px;top:815px" width="32" height="26" viewBox="0 0 32 26" fill="none" stroke="#6eb4e8" stroke-width="1.9" stroke-linejoin="round">
<path d="M5 4 H27 V18 H5 Z"/><path d="M2 19 H30 V22 H2 Z"/><path d="M14 7.5 H18"/>
</svg>
<div class="lbl" style="top:850px">Assets</div>
<!-- organizations -->
<svg style="left:34px;top:888px" width="32" height="30" viewBox="0 0 32 30" fill="none" stroke="#6eb4e8" stroke-width="1.9" stroke-linejoin="round">
<path d="M4 27 V3 H15 V27"/><path d="M15 11 H26 V27"/><path d="M1.5 27.5 H29"/><path d="M8 9 H11 M8 14 H11 M8 19 H11 M18.5 16 H22 M18.5 21 H22"/>
</svg>
<div class="lbl" style="top:924px">Organizations</div>
<!-- projects -->
<svg style="left:34px;top:965px" width="32" height="26" viewBox="0 0 32 26" fill="none" stroke="#6eb4e8" stroke-width="1.9">
<rect x="3.5" y="3" width="25" height="19"/><path d="M3.5 9.5 H28.5 M3.5 15.5 H28.5 M12 9.5 V22"/>
</svg>
<div class="lbl" style="top:999px">Projects</div>
<!-- insights -->
<svg style="left:34px;top:1040px" width="32" height="26" viewBox="0 0 32 26" fill="none" stroke="#6eb4e8" stroke-width="1.9" stroke-linejoin="round" stroke-linecap="round">
<path d="M3 19 L11 11 L16 16 L27 5"/><path d="M20 5 H27 V12"/>
</svg>
<div class="lbl" style="top:1075px">Insights</div>
<!-- settings -->
<svg style="left:34px;top:1113px" width="32" height="30" viewBox="0 0 32 30" fill="none" stroke="#6eb4e8" stroke-width="1.9" stroke-linejoin="round">
<path d="M13.3 2.5 H18.7 L19.5 6.5 L22.3 8.1 L26.2 6.8 L28.9 11.5 L25.8 14.2 V17.4 L28.9 20.1 L26.2 24.8 L22.3 23.5 L19.5 25.1 L18.7 29 H13.3 L12.5 25.1 L9.7 23.5 L5.8 24.8 L3.1 20.1 L6.2 17.4 V14.2 L3.1 11.5 L5.8 6.8 L9.7 8.1 L12.5 6.5 Z"/><circle cx="16" cy="15.8" r="4.8"/>
</svg>
<div class="lbl" style="top:1149px">Settings</div>
<div class="abs" style="left:0;top:1249px;width:100px;height:1px;background:#c5ccef"></div>
<div class="abs" style="left:6px;top:1258px;width:75px;height:75px;border-radius:50%;background:#ff12b8"></div>
<svg style="left:0px;top:1240px" width="100" height="97" viewBox="0 0 100 97">
<path d="M34 37.5 H57 a5 5 0 0 1 5 5 V58 a5 5 0 0 1 -5 5" fill="none" stroke="#fff" stroke-width="2.6"/>
<path d="M30 42.8 H52 a5 5 0 0 1 5 5 V63 a5.5 5.5 0 0 1 -5.5 5.5 H44.5 L39.5 74.7 L35.5 68.5 H29.5 a5.5 5.5 0 0 1 -5.5 -5.5 V48.8 a6 6 0 0 1 6 -6 Z" fill="#fff" stroke="#ff12b8" stroke-width="2"/>
</svg>
</div>

<div id="scroll">
<div style="position:absolute;left:3px;top:13px;width:0;height:0;border-left:7px solid transparent;border-right:7px solid transparent;border-bottom:7px solid #8a8a8a"></div>
<div style="position:absolute;left:4px;top:31px;width:12px;height:353px;border-radius:6px;background:#8a8a8a"></div>
<div style="position:absolute;left:3px;top:1316px;width:0;height:0;border-left:7px solid transparent;border-right:7px solid transparent;border-top:7px solid #8a8a8a"></div>
</div>
</body></html>
